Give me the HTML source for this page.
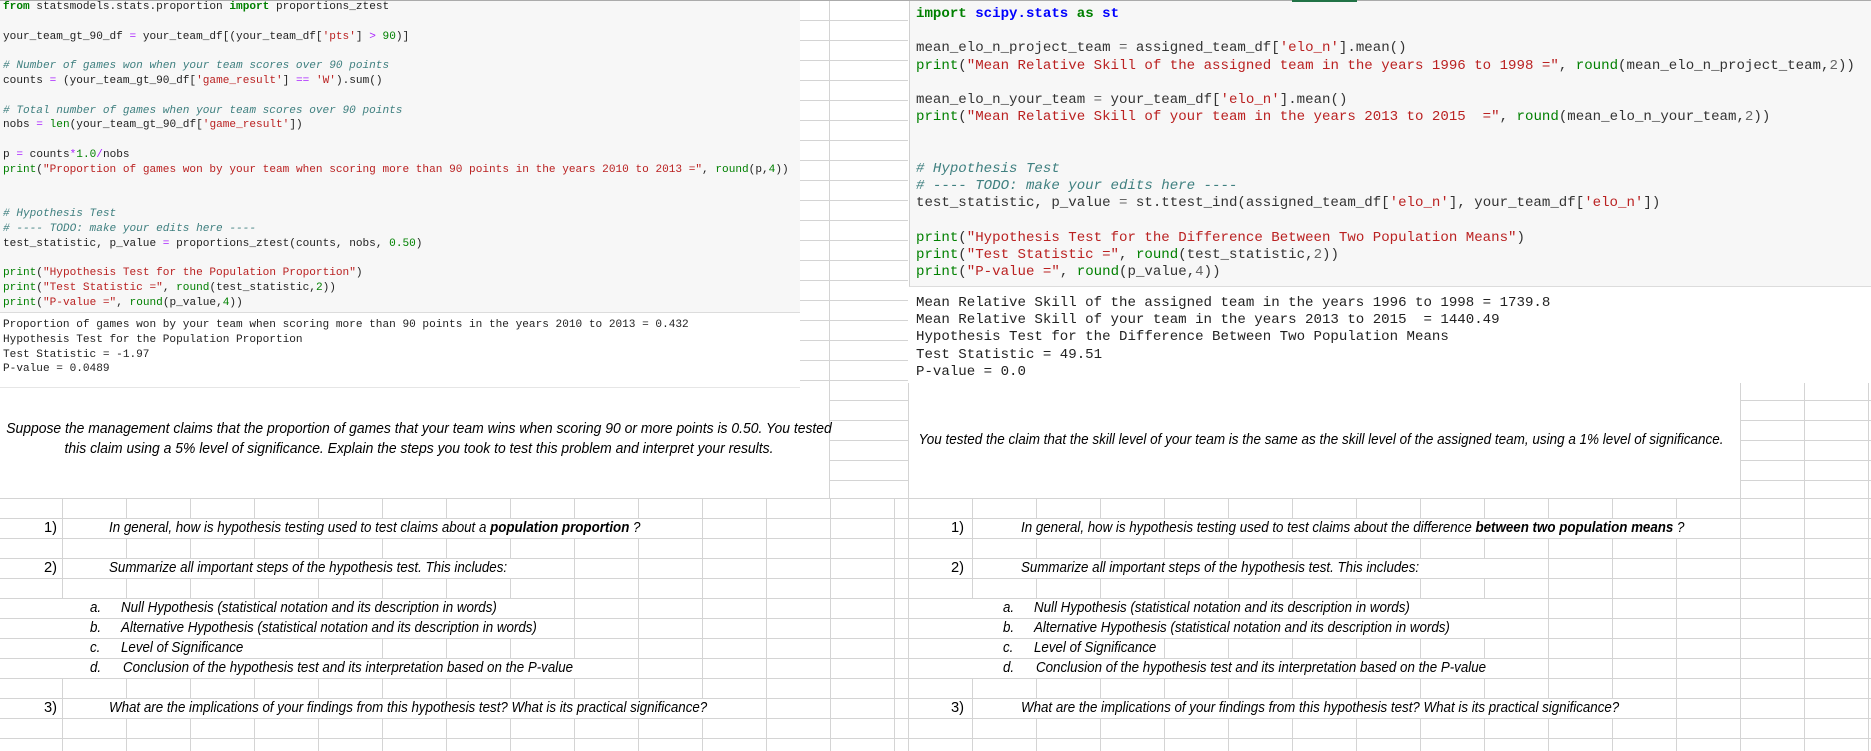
<!DOCTYPE html>
<html><head><meta charset="utf-8">
<style>
*{margin:0;padding:0;box-sizing:border-box}
body{width:1871px;height:751px;overflow:hidden;background:#fff;position:relative;font-family:"Liberation Sans",sans-serif}
.abs{position:absolute}
.gridA{left:0;top:498px;width:908px;height:253px;
background-image:linear-gradient(to right,#d4d4d4 1px,transparent 1px),linear-gradient(to bottom,#d4d4d4 1px,transparent 1px);
background-size:64px 20px;background-position:62px 0,0 0}
.gridB{left:908px;top:498px;width:963px;height:253px;
background-image:linear-gradient(to right,#d4d4d4 1px,transparent 1px),linear-gradient(to bottom,#d4d4d4 1px,transparent 1px);
background-size:64px 20px;background-position:0 0,0 0}
.gridC{left:800px;top:0;width:108px;height:498px;
background-image:linear-gradient(to bottom,#d4d4d4 1px,transparent 1px);background-size:108px 20px}
.gridD{left:1740px;top:383px;width:131px;height:115px;
background-image:linear-gradient(to right,#d4d4d4 1px,transparent 1px),linear-gradient(to bottom,#d4d4d4 1px,transparent 1px);
background-size:64px 20px;background-position:0 -3px,0 -3px}
.mask{position:absolute;background:#fff;height:19px}
.code{position:absolute;white-space:pre;font-family:"Liberation Mono",monospace;color:#222}
.lc{font-size:11.1px;line-height:14.8px}
.rc{font-size:14.1px;line-height:17.2px;color:#333}
.k{color:#008000;font-weight:bold}
.b{color:#0000ff;font-weight:bold}
.s{color:#ba2121}
.c{color:#408080;font-style:italic}
.n{color:#008000}
.o{color:#aa22ff}
.g{color:#666}
.bi{color:#008000}
.t{position:absolute;white-space:pre;font-family:"Liberation Sans",sans-serif;font-style:italic;font-size:14.67px;line-height:20px;color:#000;transform:scaleX(0.91);transform-origin:0 0}
.num{position:absolute;white-space:pre;font-family:"Liberation Sans",sans-serif;font-size:14.67px;line-height:20px;text-align:right;width:40px}
.t b{font-weight:bold}
.ctr{transform-origin:50% 0}
</style></head><body>

<div class="abs gridA"></div>
<div class="abs gridB"></div>
<div class="abs gridC"></div>
<div class="abs" style="left:829px;top:0;width:1px;height:498px;background:#d4d4d4"></div>
<div class="abs" style="left:908px;top:383px;width:1px;height:115px;background:#d4d4d4"></div>
<div class="abs gridD"></div>
<div class="abs" style="left:800px;top:389px;width:29px;height:109px;background:#fff"></div>

<!-- left code image -->
<div class="abs" style="left:0;top:0;width:800px;height:312px;background:#f7f7f7"></div>
<div class="abs" style="left:0;top:312px;width:800px;height:76px;background:#fff;border-top:1px solid #dcdcdc;border-bottom:1px solid #e6e6e6"></div>
<div class="code lc" style="left:3px;top:0"><span class="k">from</span> statsmodels.stats.proportion <span class="k">import</span> proportions_ztest

your_team_gt_90_df <span class="o">=</span> your_team_df[(your_team_df[<span class="s">'pts'</span>] <span class="o">&gt;</span> <span class="n">90</span>)]

<span class="c"># Number of games won when your team scores over 90 points</span>
counts <span class="o">=</span> (your_team_gt_90_df[<span class="s">'game_result'</span>] <span class="o">==</span> <span class="s">'W'</span>).sum()

<span class="c"># Total number of games when your team scores over 90 points</span>
nobs <span class="o">=</span> <span class="bi">len</span>(your_team_gt_90_df[<span class="s">'game_result'</span>])

p <span class="o">=</span> counts<span class="o">*</span><span class="n">1.0</span><span class="o">/</span>nobs
<span class="bi">print</span>(<span class="s">"Proportion of games won by your team when scoring more than 90 points in the years 2010 to 2013 ="</span>, <span class="bi">round</span>(p,<span class="n">4</span>))


<span class="c"># Hypothesis Test</span>
<span class="c"># ---- TODO: make your edits here ----</span>
test_statistic, p_value <span class="o">=</span> proportions_ztest(counts, nobs, <span class="n">0.50</span>)

<span class="bi">print</span>(<span class="s">"Hypothesis Test for the Population Proportion"</span>)
<span class="bi">print</span>(<span class="s">"Test Statistic ="</span>, <span class="bi">round</span>(test_statistic,<span class="n">2</span>))
<span class="bi">print</span>(<span class="s">"P-value ="</span>, <span class="bi">round</span>(p_value,<span class="n">4</span>))</div>
<div class="code lc" style="left:3px;top:318px">Proportion of games won by your team when scoring more than 90 points in the years 2010 to 2013 = 0.432
Hypothesis Test for the Population Proportion
Test Statistic = -1.97
P-value = 0.0489</div>

<!-- right code image -->
<div class="abs" style="left:909px;top:0;width:962px;height:287px;background:#f7f7f7;border-left:1px solid #d0d0d0;border-bottom:1px solid #dcdcdc"></div>
<div class="abs" style="left:909px;top:288px;width:832px;height:95px;background:#fff"></div>
<div class="abs" style="left:1741px;top:288px;width:130px;height:95px;background:#fff"></div>
<div class="code rc" style="left:916px;top:6px"><span class="k">import</span> <span class="b">scipy.stats</span> <span class="k">as</span> <span class="b">st</span>

mean_elo_n_project_team <span class="g">=</span> assigned_team_df[<span class="s">'elo_n'</span>].mean()
<span class="bi">print</span>(<span class="s">"Mean Relative Skill of the assigned team in the years 1996 to 1998 ="</span>, <span class="bi">round</span>(mean_elo_n_project_team,<span class="g">2</span>))

mean_elo_n_your_team <span class="g">=</span> your_team_df[<span class="s">'elo_n'</span>].mean()
<span class="bi">print</span>(<span class="s">"Mean Relative Skill of your team in the years 2013 to 2015  ="</span>, <span class="bi">round</span>(mean_elo_n_your_team,<span class="g">2</span>))


<span class="c"># Hypothesis Test</span>
<span class="c"># ---- TODO: make your edits here ----</span>
test_statistic, p_value <span class="g">=</span> st.ttest_ind(assigned_team_df[<span class="s">'elo_n'</span>], your_team_df[<span class="s">'elo_n'</span>])

<span class="bi">print</span>(<span class="s">"Hypothesis Test for the Difference Between Two Population Means"</span>)
<span class="bi">print</span>(<span class="s">"Test Statistic ="</span>, <span class="bi">round</span>(test_statistic,<span class="g">2</span>))
<span class="bi">print</span>(<span class="s">"P-value ="</span>, <span class="bi">round</span>(p_value,<span class="g">4</span>))</div>
<div class="code rc" style="left:916px;top:295px;color:#222">Mean Relative Skill of the assigned team in the years 1996 to 1998 = 1739.8
Mean Relative Skill of your team in the years 2013 to 2015  = 1440.49
Hypothesis Test for the Difference Between Two Population Means
Test Statistic = 49.51
P-value = 0.0</div>

<!-- top border -->
<div class="abs" style="left:0;top:0;width:1871px;height:1px;background:#ababab"></div>
<div class="abs" style="left:1292px;top:0;width:65px;height:2px;background:#217346"></div>

<!-- prompts -->
<div class="t ctr" style="left:-26px;top:419px;width:890px;text-align:center;transform:scaleX(0.95)">Suppose the management claims that the proportion of games that your team wins when scoring 90 or more points is 0.50. You tested
this claim using a 5% level of significance. Explain the steps you took to test this problem and interpret your results.</div>
<div class="t ctr" style="left:871px;top:430px;width:900px;text-align:center;transform:scaleX(0.92)">You tested the claim that the skill level of your team is the same as the skill level of the assigned team, using a 1% level of significance.</div>

<!-- masks left -->
<div class="mask" style="left:63px;top:519px;width:639px"></div>
<div class="mask" style="left:63px;top:559px;width:511px"></div>
<div class="mask" style="left:0;top:599px;width:574px"></div>
<div class="mask" style="left:0;top:619px;width:574px"></div>
<div class="mask" style="left:0;top:639px;width:382px"></div>
<div class="mask" style="left:0;top:659px;width:638px"></div>
<div class="mask" style="left:63px;top:699px;width:703px"></div>
<!-- masks right -->
<div class="mask" style="left:973px;top:519px;width:767px"></div>
<div class="mask" style="left:973px;top:559px;width:575px"></div>
<div class="mask" style="left:909px;top:599px;width:639px"></div>
<div class="mask" style="left:909px;top:619px;width:639px"></div>
<div class="mask" style="left:909px;top:639px;width:255px"></div>
<div class="mask" style="left:909px;top:659px;width:639px"></div>
<div class="mask" style="left:973px;top:699px;width:703px"></div>

<!-- left questions -->
<div class="num" style="left:17px;top:518px">1)</div>
<div class="t" style="left:109px;top:518px">In general, how is hypothesis testing used to test claims about a <b>population proportion</b> ?</div>
<div class="num" style="left:17px;top:558px">2)</div>
<div class="t" style="left:109px;top:558px">Summarize all important steps of the hypothesis test. This includes:</div>
<div class="t" style="left:90px;top:598px">a.</div><div class="t" style="left:121px;top:598px">Null Hypothesis (statistical notation and its description in words)</div>
<div class="t" style="left:90px;top:618px">b.</div><div class="t" style="left:121px;top:618px">Alternative Hypothesis (statistical notation and its description in words)</div>
<div class="t" style="left:90px;top:638px">c.</div><div class="t" style="left:121px;top:638px">Level of Significance</div>
<div class="t" style="left:90px;top:658px">d.</div><div class="t" style="left:123px;top:658px">Conclusion of the hypothesis test and its interpretation based on the P-value</div>
<div class="num" style="left:17px;top:698px">3)</div>
<div class="t" style="left:109px;top:698px">What are the implications of your findings from this hypothesis test? What is its practical significance?</div>

<!-- right questions -->
<div class="num" style="left:924px;top:518px">1)</div>
<div class="t" style="left:1021px;top:518px">In general, how is hypothesis testing used to test claims about the difference <b>between two population means</b> ?</div>
<div class="num" style="left:924px;top:558px">2)</div>
<div class="t" style="left:1021px;top:558px">Summarize all important steps of the hypothesis test. This includes:</div>
<div class="t" style="left:1003px;top:598px">a.</div><div class="t" style="left:1034px;top:598px">Null Hypothesis (statistical notation and its description in words)</div>
<div class="t" style="left:1003px;top:618px">b.</div><div class="t" style="left:1034px;top:618px">Alternative Hypothesis (statistical notation and its description in words)</div>
<div class="t" style="left:1003px;top:638px">c.</div><div class="t" style="left:1034px;top:638px">Level of Significance</div>
<div class="t" style="left:1003px;top:658px">d.</div><div class="t" style="left:1036px;top:658px">Conclusion of the hypothesis test and its interpretation based on the P-value</div>
<div class="num" style="left:924px;top:698px">3)</div>
<div class="t" style="left:1021px;top:698px">What are the implications of your findings from this hypothesis test? What is its practical significance?</div>

</body></html>
